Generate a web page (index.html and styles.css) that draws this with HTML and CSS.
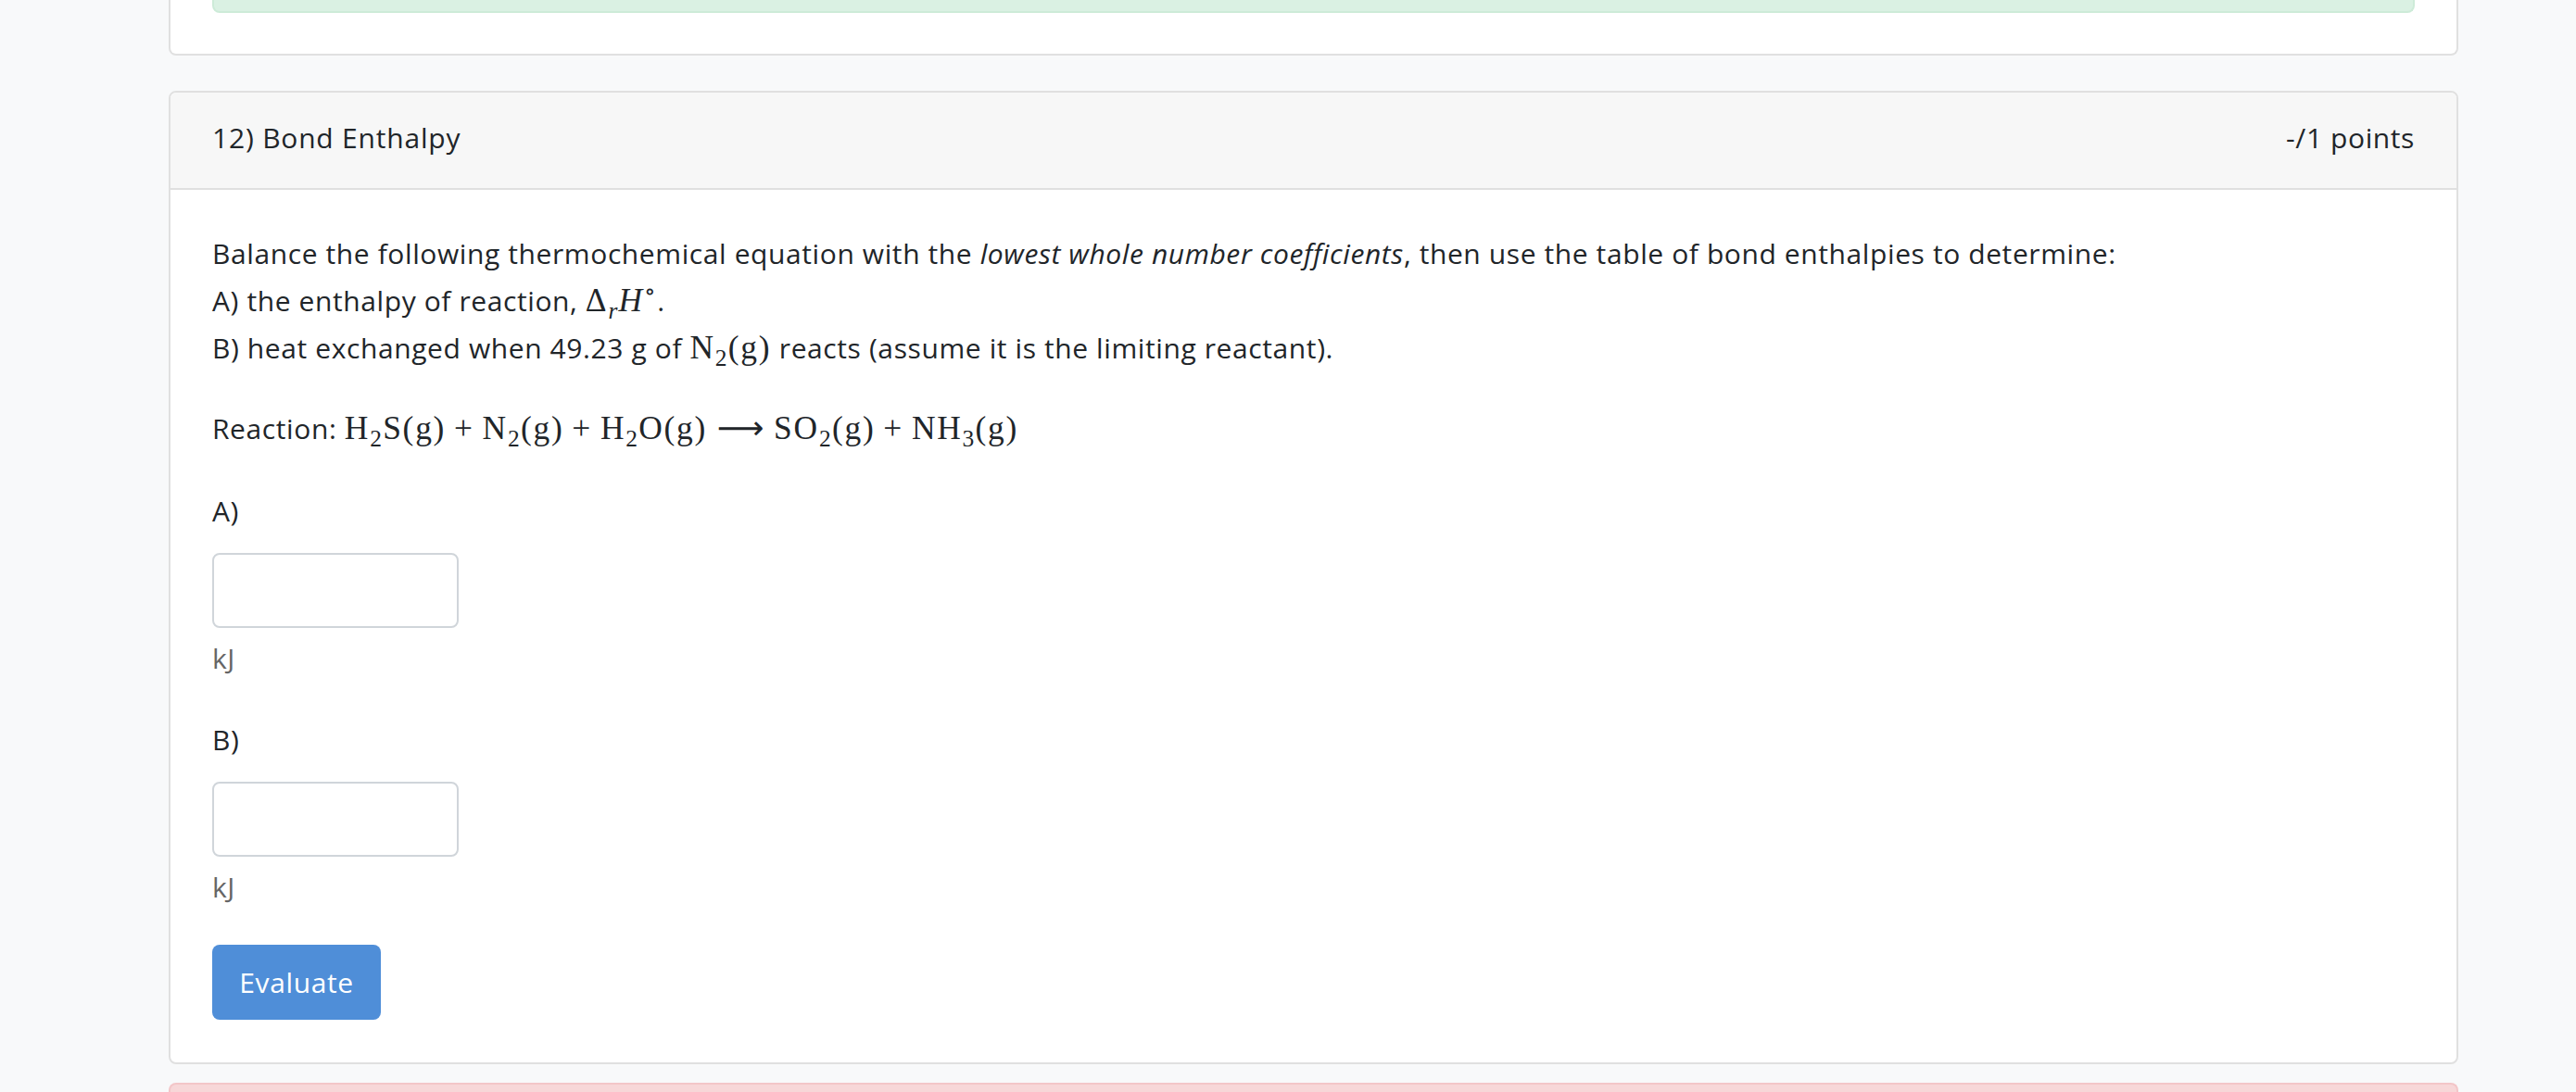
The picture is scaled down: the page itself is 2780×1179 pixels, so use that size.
FILE: index.html
```html
<!DOCTYPE html>
<html lang="en">
<head>
<meta charset="utf-8">
<title>Bond Enthalpy</title>
<link rel="stylesheet" href="styles.css">
</head>
<body>
<main class="page">
  <section class="card card-prev">
    <div class="alert-success"></div>
  </section>

  <section class="card">
    <header class="card-header">
      <span class="q-title">12) Bond Enthalpy</span>
      <span class="q-points">-/1 points</span>
    </header>
    <div class="card-body">
      <p class="prompt">Balance the following thermochemical equation with the <em>lowest whole number coefficients</em>, then use the table of bond enthalpies to determine:<br>A) the enthalpy of reaction, <span class="math"><span class="up">Δ</span><sub class="it">r</sub><span class="it">H</span><sup class="deg">∘</sup></span>.<br>B) heat exchanged when 49.23 g of <span class="math">N<sub>2</sub>(g)</span> reacts (assume it is the limiting reactant).</p>
      <p class="reaction">Reaction: <span class="math">H<sub>2</sub>S(g)<span class="op">+</span>N<sub>2</sub>(g)<span class="op">+</span>H<sub>2</sub>O(g)<span class="arrow">⟶</span>SO<sub>2</sub>(g)<span class="op">+</span>NH<sub>3</sub>(g)</span></p>

      <div class="part">
        <div class="part-label">A)</div>
        <input class="answer" type="text" aria-label="A">
        <div class="unit">kJ</div>
      </div>

      <div class="part">
        <div class="part-label">B)</div>
        <input class="answer" type="text" aria-label="B">
        <div class="unit">kJ</div>
      </div>

      <button class="btn-evaluate" type="button">Evaluate</button>
    </div>
  </section>

  <div class="alert-danger"></div>
</main>
</body>
</html>
```

FILE: styles.css
```css
html {
  overflow: hidden;
}
body {
  margin: 0;
  background: #f8f9fa;
  color: #212529;
  font-family: "Open Sans", "Noto Sans", sans-serif;
  font-size: 30px;
  letter-spacing: 0.6px;
  line-height: 51px;
}
.page {
  padding: 0 127px 0 182px;
}
.card {
  background: #ffffff;
  border: 2px solid #e0e0e0;
  border-radius: 8px;
  margin-top: 38px;
}
.card-prev {
  margin-top: 0;
  border-top: none;
  border-top-left-radius: 0;
  border-top-right-radius: 0;
  padding: 0 45px 44px;
}
.alert-success {
  height: 12px;
  background: #daf1e3;
  border: 2px solid #cdebd8;
  border-top: none;
  border-radius: 0 0 8px 8px;
}
.card-header {
  display: flex;
  justify-content: space-between;
  align-items: center;
  background: #f7f7f7;
  border-bottom: 2px solid #e0e0e0;
  border-radius: 6px 6px 0 0;
  padding: 23px 45px 29px 45px;
}
.q-title {
  letter-spacing: 0.8px;
}
.card-body {
  padding: 43px 45px 46px 45px;
}
p {
  margin: 0;
}
.prompt {
  margin-bottom: 35px;
}
.reaction {
  margin-bottom: 38px;
}
em {
  font-style: italic;
}
.math {
  font-family: "Liberation Serif", "DejaVu Serif", serif;
  font-size: 1.18em;
  letter-spacing: 0.05em;
  white-space: nowrap;
}
.math sub {
  font-size: 0.72em;
  vertical-align: -0.32em;
  line-height: 0;
  letter-spacing: 0;
  padding-right: 0.05em;
}
.math sup {
  font-size: 0.72em;
  line-height: 0;
}
.math .it {
  font-style: italic;
}
.math .deg {
  vertical-align: 0.5em;
}
.math .op {
  padding: 0 0.25em;
}
.arrow {
  font-family: "DejaVu Sans", sans-serif;
  font-size: 1em;
  letter-spacing: 0;
  padding: 0 0.3em;
}
.part {
  margin-bottom: 37px;
}
.part-label {
  margin-bottom: 20px;
}
.answer {
  display: block;
  box-sizing: border-box;
  width: 266px;
  height: 81px;
  border: 2px solid #d0d5da;
  border-radius: 8px;
  background: #ffffff;
  margin: 0 0 7px 0;
  padding: 0 20px;
  font: inherit;
}
.unit {
  color: #666666;
}
.btn-evaluate {
  display: block;
  box-sizing: border-box;
  height: 81px;
  width: 182px;
  margin-top: 4px;
  background: #4f8ed8;
  border: none;
  border-radius: 8px;
  color: #ffffff;
  font-family: inherit;
  font-size: 30px;
  letter-spacing: 0.6px;
  padding: 0;
}
.alert-danger {
  margin-top: 20px;
  height: 8px;
  background: #f7d7d8;
  border: 2px solid #f3c6c8;
  border-bottom: none;
  border-radius: 8px 8px 0 0;
}
```
